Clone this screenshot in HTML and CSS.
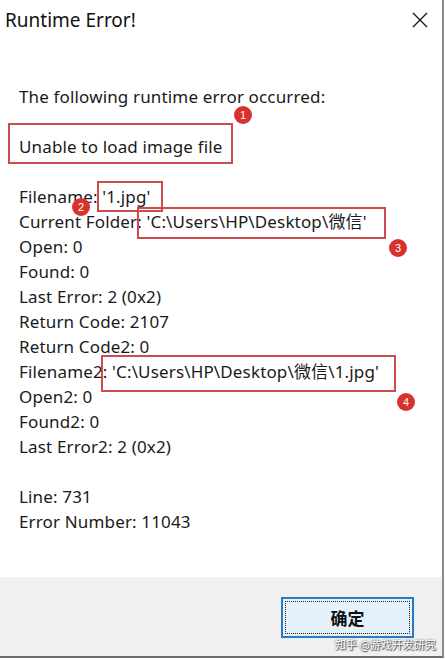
FILE: index.html
```html
<!DOCTYPE html>
<html>
<head>
<meta charset="utf-8">
<link rel="stylesheet" href="styles.css">
</head>
<body>
<div class="dialog">
  <div class="titlebar">
    <span class="title">Runtime Error!</span>
    <svg class="close" width="16" height="16" viewBox="0 0 16 16"><path d="M1 1 L15 15 M15 1 L1 15" stroke="#1a1a1a" stroke-width="1.4" fill="none"/></svg>
  </div>
  <div class="content">
    <p class="intro">The following runtime error occurred:</p>
    <p class="errmsg">Unable to load image file</p>
    <div class="details">
      <div>Filename: '1.jpg'</div>
      <div>Current Folder: 'C:\Users\HP\Desktop\微信'</div>
      <div>Open: 0</div>
      <div>Found: 0</div>
      <div>Last Error: 2 (0x2)</div>
      <div>Return Code: 2107</div>
      <div>Return Code2: 0</div>
      <div>Filename2: 'C:\Users\HP\Desktop\微信\1.jpg'</div>
      <div>Open2: 0</div>
      <div>Found2: 0</div>
      <div>Last Error2: 2 (0x2)</div>
      <div class="gap">Line: 731</div>
      <div>Error Number: 11043</div>
    </div>
  </div>
  <div class="footer">
    <button class="ok"><span class="focus">确定</span></button>
  </div>

  <div class="mark box1"></div>
  <div class="mark box2"></div>
  <div class="mark box3"></div>
  <div class="mark box4"></div>
  <span class="badge b1">1</span>
  <span class="badge b2">2</span>
  <span class="badge b3">3</span>
  <span class="badge b4">4</span>
  <span class="watermark">知乎 @游戏开发研究</span>
</div>
</body>
</html>
```
FILE: styles.css
```css
* { box-sizing: border-box; }
html, body { margin: 0; padding: 0; background: #ffffff; }
body {
  width: 446px;
  height: 660px;
  overflow: hidden;
  font-family: "Noto Sans", "Noto Sans CJK SC", sans-serif;
  color: #1a1a1a;
}
.dialog {
  position: relative;
  width: 444px;
  height: 658px;
  background: #fff;
  border-right: 2px solid #8a8a8a;
  border-bottom: 2px solid #6e6e6e;
  display: flex;
  flex-direction: column;
}
.titlebar {
  height: 44px;
  display: flex;
  align-items: flex-start;
  justify-content: space-between;
  padding: 6px 14px 0 5px;
}
.title {
  font-size: 19px;
  line-height: 28px;
  color: #111;
}
.close { margin-top: 6px; }
.content {
  flex: 1;
  padding: 40px 0 0 19px;
  font-size: 17px;
  letter-spacing: 0.15px;
  line-height: 25px;
}
.content p { margin: 0; }
.errmsg { margin-top: 25px !important; }
.details { margin-top: 25px; }
.gap { margin-top: 25px; }
.footer {
  height: 79px;
  background: #f0f0f0;
  display: flex;
  justify-content: flex-end;
  align-items: flex-start;
  padding: 20px 28px 0 0;
}
.ok {
  width: 133px;
  height: 41px;
  padding: 2px;
  background: #e5f1fb;
  border: 2px solid #2a7ac0;
  font-family: "Noto Sans CJK SC", sans-serif;
  font-size: 17px;
  color: #111;
}
.focus {
  display: flex;
  align-items: center;
  justify-content: center;
  width: 100%;
  height: 100%;
  border: 1px dotted #222;
  font-weight: 600;
}
.mark {
  position: absolute;
  border: 2px solid #cf4a4d;
}
.box1 { left: 8px; top: 123px; width: 225px; height: 41px; }
.box2 { left: 97px; top: 181px; width: 66px; height: 31px; }
.box3 { left: 137px; top: 207px; width: 249px; height: 32px; }
.box4 { left: 101px; top: 355px; width: 295px; height: 37px; }
.badge {
  position: absolute;
  width: 18px;
  height: 18px;
  border-radius: 50%;
  background: #d8322e;
  color: #fff;
  font-family: "Liberation Sans", sans-serif;
  font-size: 11px;
  line-height: 18px;
  text-align: center;
}
.b1 { left: 234px; top: 106px; }
.b2 { left: 72px; top: 198px; }
.b3 { left: 389px; top: 239px; }
.b4 { left: 397px; top: 393px; }
.watermark {
  position: absolute;
  left: 335px;
  top: 637px;
  font-family: "Noto Sans CJK SC", sans-serif;
  font-size: 11px;
  line-height: 15px;
  color: #fff;
  text-shadow: 0 0 2px #555, 1px 1px 1px #444;
  white-space: nowrap;
}
```
